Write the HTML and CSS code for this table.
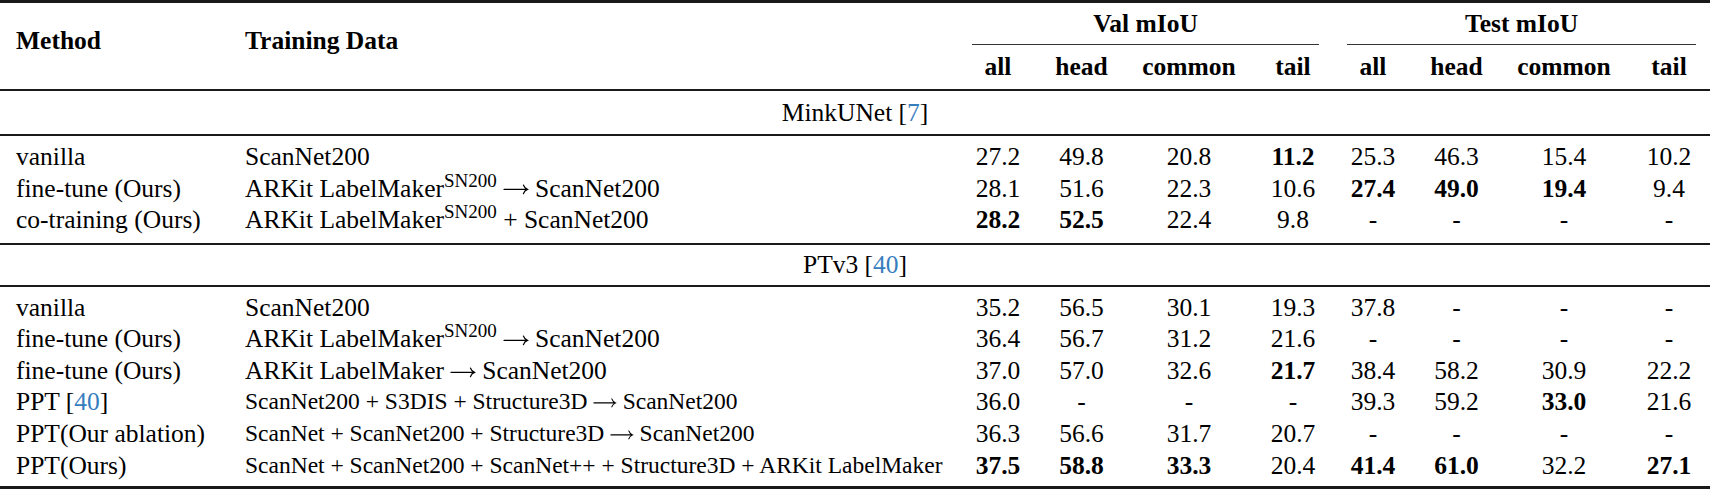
FILE: index.html
```html
<!DOCTYPE html>
<html>
<head>
	<meta charset="utf-8"/>
	<title>mIoU results</title>
	<link rel="stylesheet" href="styles.css">
</head>
<body>
<table class="results">
	<colgroup>
		<col class="c-method"><col class="c-data">
		<col class="c-all"><col class="c-head"><col class="c-common"><col class="c-tail">
		<col class="c-all"><col class="c-head"><col class="c-common"><col class="c-tail-last">
	</colgroup>
	<thead>
		<tr class="hrow1">
			<th rowspan="2" class="txt multi">Method</th>
			<th rowspan="2" class="txt data multi">Training Data</th>
			<th colspan="4"><div class="cmid">Val mIoU</div></th>
			<th colspan="4"><div class="cmid">Test mIoU</div></th>
		</tr>
		<tr class="hrow2">
			<th>all</th><th>head</th><th>common</th><th>tail</th>
			<th>all</th><th>head</th><th>common</th><th>tail</th>
		</tr>
	</thead>
	<tbody>
		<tr class="section"><td colspan="10">MinkUNet [<span class="cite">7</span>]</td></tr>
		<tr class="row first">
			<td class="txt">vanilla</td><td class="txt data">ScanNet200</td>
			<td>27.2</td><td>49.8</td><td>20.8</td><td class="best">11.2</td>
			<td>25.3</td><td>46.3</td><td>15.4</td><td>10.2</td>
		</tr>
		<tr class="row">
			<td class="txt">fine-tune (Ours)</td>
			<td class="txt data">ARKit LabelMaker<sup class="sup">SN200</sup> <svg class="arrow" viewBox="0 0 100 50"><path d="M4 25H95M80 8Q84 20 96 25Q84 30 80 42"/></svg> ScanNet200</td>
			<td>28.1</td><td>51.6</td><td>22.3</td><td>10.6</td>
			<td class="best">27.4</td><td class="best">49.0</td><td class="best">19.4</td><td>9.4</td>
		</tr>
		<tr class="row last">
			<td class="txt">co-training (Ours)</td>
			<td class="txt data">ARKit LabelMaker<sup class="sup">SN200</sup> + ScanNet200</td>
			<td class="best">28.2</td><td class="best">52.5</td><td>22.4</td><td>9.8</td>
			<td>-</td><td>-</td><td>-</td><td>-</td>
		</tr>

		<tr class="section sec2"><td colspan="10">PTv3 [<span class="cite">40</span>]</td></tr>
		<tr class="row2 first">
			<td class="txt">vanilla</td><td class="txt data">ScanNet200</td>
			<td>35.2</td><td>56.5</td><td>30.1</td><td>19.3</td>
			<td>37.8</td><td>-</td><td>-</td><td>-</td>
		</tr>
		<tr class="row2">
			<td class="txt">fine-tune (Ours)</td>
			<td class="txt data">ARKit LabelMaker<sup class="sup">SN200</sup> <svg class="arrow" viewBox="0 0 100 50"><path d="M4 25H95M80 8Q84 20 96 25Q84 30 80 42"/></svg> ScanNet200</td>
			<td>36.4</td><td>56.7</td><td>31.2</td><td>21.6</td>
			<td>-</td><td>-</td><td>-</td><td>-</td>
		</tr>
		<tr class="row2">
			<td class="txt">fine-tune (Ours)</td>
			<td class="txt data">ARKit LabelMaker <svg class="arrow" viewBox="0 0 100 50"><path d="M4 25H95M80 8Q84 20 96 25Q84 30 80 42"/></svg> ScanNet200</td>
			<td>37.0</td><td>57.0</td><td>32.6</td><td class="best">21.7</td>
			<td>38.4</td><td>58.2</td><td>30.9</td><td>22.2</td>
		</tr>
		<tr class="row2">
			<td class="txt">PPT [<span class="cite">40</span>]</td>
			<td class="txt data small">ScanNet200 + S3DIS + Structure3D <svg class="arrow" viewBox="0 0 100 50"><path d="M4 25H95M80 8Q84 20 96 25Q84 30 80 42"/></svg> ScanNet200</td>
			<td>36.0</td><td>-</td><td>-</td><td>-</td>
			<td>39.3</td><td>59.2</td><td class="best">33.0</td><td>21.6</td>
		</tr>
		<tr class="row2">
			<td class="txt">PPT(Our ablation)</td>
			<td class="txt data small">ScanNet + ScanNet200 + Structure3D <svg class="arrow" viewBox="0 0 100 50"><path d="M4 25H95M80 8Q84 20 96 25Q84 30 80 42"/></svg> ScanNet200</td>
			<td>36.3</td><td>56.6</td><td>31.7</td><td>20.7</td>
			<td>-</td><td>-</td><td>-</td><td>-</td>
		</tr>
		<tr class="row2 last">
			<td class="txt">PPT(Ours)</td>
			<td class="txt data small">ScanNet + ScanNet200 + ScanNet++ + Structure3D + ARKit LabelMaker</td>
			<td class="best">37.5</td><td class="best">58.8</td><td class="best">33.3</td><td>20.4</td>
			<td class="best">41.4</td><td class="best">61.0</td><td>32.2</td><td class="best">27.1</td>
		</tr>
	</tbody>
</table>
</body>
</html>
```

FILE: styles.css
```css
body{
	margin: 0;
	background: #fff;
}
*{
	font-family: "Liberation Serif", "Times New Roman", serif;
}

.results{
	width: 1710px;
	table-layout: fixed;
	border-collapse: separate;
	border-spacing: 0;
	border-top: 3px solid #1a1a1a;
	border-bottom: 3px solid #1a1a1a;
	color: #000;
	font-size: 25.5px;
}
.c-method{ width: 228px; }
.c-data{ width: 730px; }
.c-all{ width: 80px; }
.c-head{ width: 87px; }
.c-common{ width: 128px; }
.c-tail{ width: 80px; }
.c-tail-last{ width: 82px; }

.results th,
.results td{
	padding: 0;
	text-align: center;
	white-space: nowrap;
}
.results th{
	font-weight: bold;
}
.results .txt{
	text-align: left;
	padding-left: 16px;
}
.results .data{
	padding-left: 17px;
}

/* header */
.hrow1 th{
	line-height: 41px;
}
.hrow1 .multi{
	vertical-align: middle;
	padding-bottom: 12px;
}
.cmid{
	margin: 0 14px;
	border-bottom: 1px solid #333;
}
.hrow2 th{
	line-height: 44px;
}

/* group titles */
.section td{
	border-top: 2px solid #1a1a1a;
	line-height: 43px;
}
.sec2 td{
	line-height: 40px;
}
.cite{
	color: #367dbd;
}

/* data rows */
.row td{
	line-height: 31.5px;
}
.row2 td{
	line-height: 31.6px;
}
.row.first td{
	border-top: 2px solid #1a1a1a;
	padding-top: 5px;
}
.row.last td{
	padding-bottom: 7.5px;
}
.row2.first td{
	border-top: 2px solid #1a1a1a;
	padding-top: 4.7px;
}
.row2.last td{
	padding-bottom: 4.7px;
}
.best{
	font-weight: bold;
}
.small{
	font-size: 23.5px;
}
.sup{
	font-size: 19px;
	line-height: 0;
	vertical-align: 10px;
}
.arrow{
	width: 1em;
	height: 0.5em;
	vertical-align: 0.02em;
	fill: none;
	stroke: #000;
	stroke-width: 4.5;
	stroke-linecap: round;
}
```
